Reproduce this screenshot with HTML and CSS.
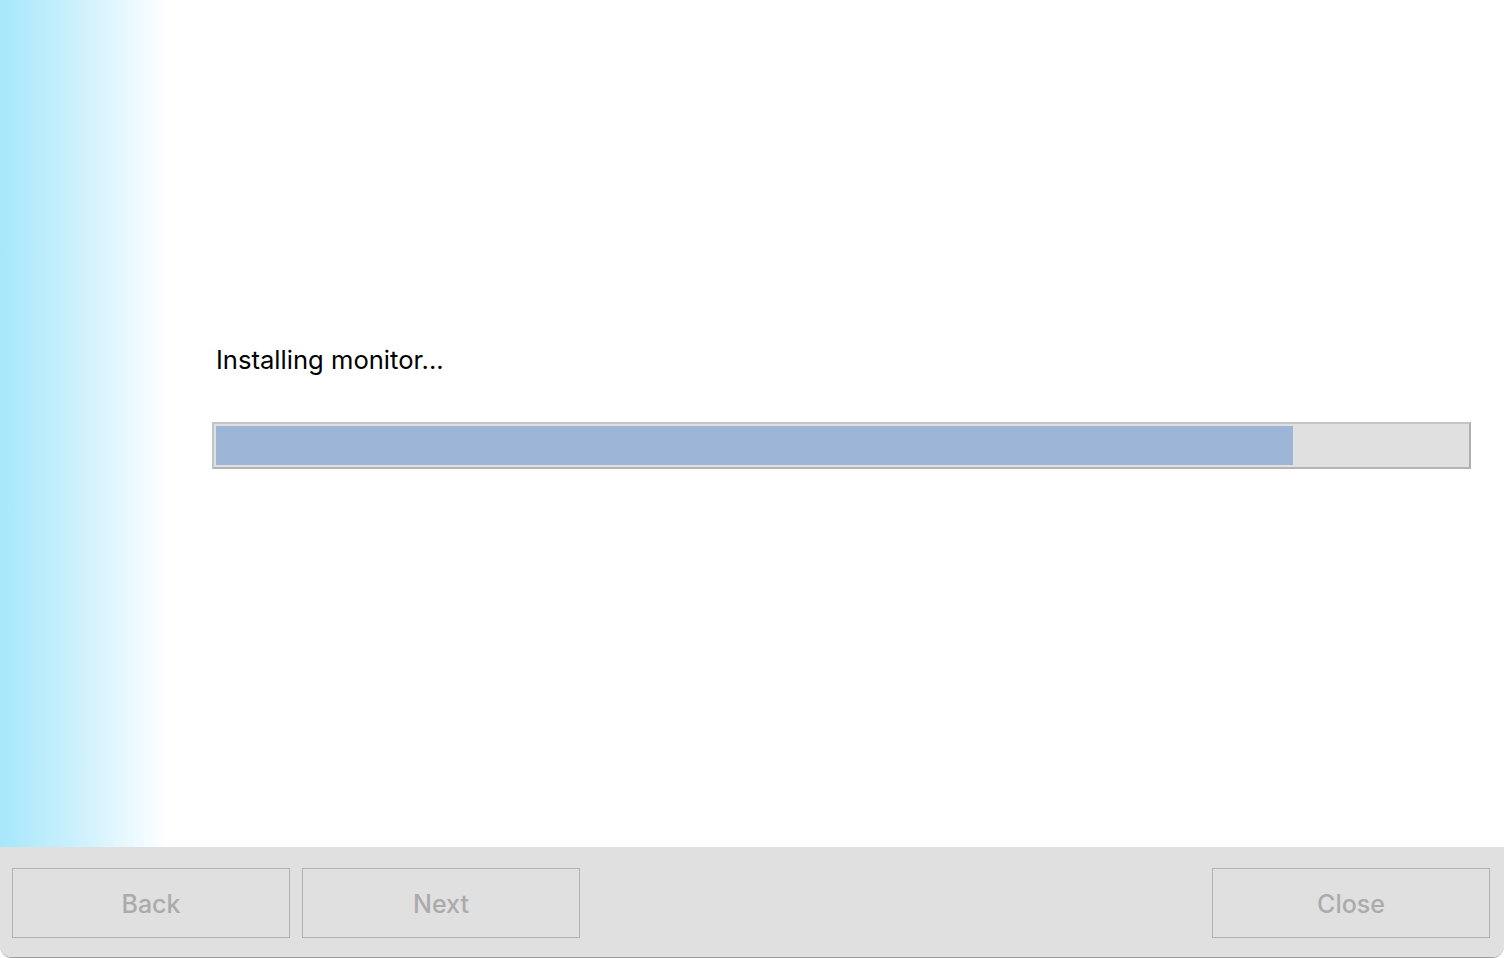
FILE: index.html
```html
<!DOCTYPE html>
<html>
<head>
<meta charset="utf-8">
<link rel="stylesheet" href="styles.css">
</head>
<body>
<div class="window">
  <div class="main">
    <div class="content">
      <div class="label">Installing monitor...</div>
      <div class="progress"><div class="fill" style="width: 86.1%"></div></div>
    </div>
  </div>
  <div class="footer">
    <div class="btn">Back</div>
    <div class="btn">Next</div>
    <div class="spacer"></div>
    <div class="btn">Close</div>
  </div>
</div>
</body>
</html>
```
FILE: styles.css
```css
html, body {
  margin: 0;
  padding: 0;
  background: #ffffff;
}
body {
  width: 1504px;
  height: 958px;
  overflow: hidden;
  font-family: Inter, "Liberation Sans", Arial, sans-serif;
}
.window {
  width: 1504px;
  height: 958px;
  display: flex;
  flex-direction: column;
  border-radius: 0 0 12px 12px;
  overflow: hidden;
  box-sizing: border-box;
  border-bottom: 1px solid #9a9a9a;
}
.main {
  height: 847px;
  flex: none;
  background: linear-gradient(to right, #a6e7fc 0px, #d6f3fd 95px, #ffffff 168px) no-repeat;
  background-color: #ffffff;
}
.content {
  display: flex;
  flex-direction: column;
  padding: 344px 33px 0 212px;
}
.label {
  padding-left: 4px;
  font-size: 25.6px;
  line-height: 32px;
  color: #000;
}
.progress {
  margin-top: 46px;
  height: 47px;
  box-sizing: border-box;
  border-top: 2px solid #c4c4c4;
  border-left: 2px solid #c4c4c4;
  border-right: 2px solid #aeaeae;
  border-bottom: 2px solid #b4b4b4;
  background: #e0e0e0;
  padding: 2px;
  display: flex;
}
.fill {
  height: 100%;
  background: #9db6d8;
}
.footer {
  flex: 1;
  background: #e0e0e0;
  display: flex;
  align-items: flex-start;
  padding: 21px 14px 0 12px;
  gap: 12px;
}
.spacer {
  flex: 1;
}
.btn {
  width: 278px;
  height: 70px;
  box-sizing: border-box;
  border: 1px solid #b2b2b2;
  display: flex;
  align-items: center;
  justify-content: center;
  padding-top: 2px;
  color: #ababab;
  font-size: 25px;
  font-weight: 500;
}
```
